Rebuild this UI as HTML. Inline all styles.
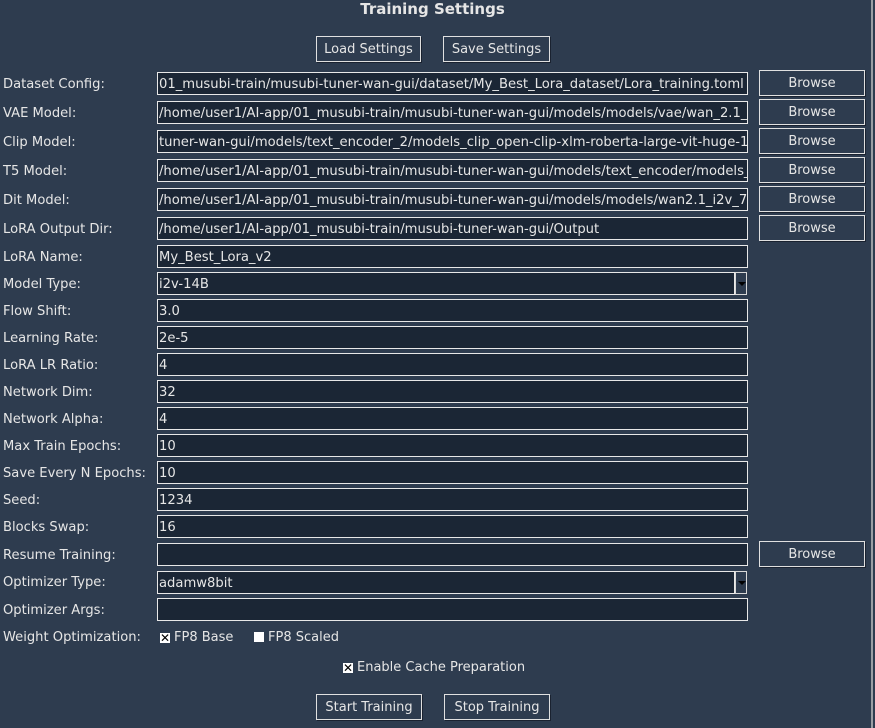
<!DOCTYPE html>
<html><head><meta charset="utf-8"><style>
body{margin:0;width:875px;height:728px;background:#2e3c4f;overflow:hidden;position:relative;font-family:"DejaVu Sans","Liberation Sans",sans-serif;font-size:13px;color:#e6e6e6}
.a{position:absolute;white-space:nowrap}
.l{position:absolute;left:3px;line-height:16px;font-size:13.1px;margin-top:2px}
.i{position:absolute;left:157px;width:588px;height:21px;border:1px solid #e8e8e8;background:#1b2635;overflow:hidden;white-space:nowrap;line-height:23px;padding-left:1px;box-sizing:content-box;font-size:13.15px}
.c{width:575px}
.ar{position:absolute;left:735px;width:10px;height:21px;border:1px solid #d8d8d8;background:#2e3c4f}
.ar:after{content:"";position:absolute;left:2px;top:9px;border-left:4px solid transparent;border-right:4px solid transparent;border-top:4px solid #000}
.b{position:absolute;border:1px solid #e0e0e0;background:#2e3c4f;text-align:center;line-height:26px;height:24px;box-shadow:1px 1px 0 #1a2230}
.br{left:759px;width:104px}
.cb{display:inline-block;width:10px;height:10px;background:#fff;vertical-align:-1px;margin-right:4px;position:relative;color:#000;font-size:12px;line-height:10px;text-align:center;font-weight:900}
</style></head><body>
<div class="a" style="left:0;width:865px;text-align:center;top:0;font-weight:bold;font-size:15px;line-height:18px">Training Settings</div>
<div class="b" style="left:316px;top:36px;width:103px">Load Settings</div>
<div class="b" style="left:443px;top:36px;width:105px">Save Settings</div>
<div class="a" style="left:871px;top:0;width:2px;height:728px;background:#9a9ea4"></div>

<div class="l" style="top:75px">Dataset Config:</div><div class="i" style="top:72px">01_musubi-train/musubi-tuner-wan-gui/dataset/My_Best_Lora_dataset/Lora_training.toml</div><div class="b br" style="top:70px">Browse</div>
<div class="l" style="top:104px">VAE Model:</div><div class="i" style="top:101px">/home/user1/AI-app/01_musubi-train/musubi-tuner-wan-gui/models/models/vae/wan_2.1_vae.safetensors</div><div class="b br" style="top:99px">Browse</div>
<div class="l" style="top:133px">Clip Model:</div><div class="i" style="top:130px">tuner-wan-gui/models/text_encoder_2/models_clip_open-clip-xlm-roberta-large-vit-huge-14.pth</div><div class="b br" style="top:128px">Browse</div>
<div class="l" style="top:162px">T5 Model:</div><div class="i" style="top:159px">/home/user1/AI-app/01_musubi-train/musubi-tuner-wan-gui/models/text_encoder/models_t5</div><div class="b br" style="top:157px">Browse</div>
<div class="l" style="top:191px">Dit Model:</div><div class="i" style="top:188px">/home/user1/AI-app/01_musubi-train/musubi-tuner-wan-gui/models/models/wan2.1_i2v_720p</div><div class="b br" style="top:186px">Browse</div>
<div class="l" style="top:220px">LoRA Output Dir:</div><div class="i" style="top:217px">/home/user1/AI-app/01_musubi-train/musubi-tuner-wan-gui/Output</div><div class="b br" style="top:215px">Browse</div>

<div class="l" style="top:248px">LoRA Name:</div><div class="i" style="top:245px">My_Best_Lora_v2</div>
<div class="l" style="top:275px">Model Type:</div><div class="i c" style="top:272px">i2v-14B</div><div class="ar" style="top:272px"></div>
<div class="l" style="top:302px">Flow Shift:</div><div class="i" style="top:299px">3.0</div>
<div class="l" style="top:329px">Learning Rate:</div><div class="i" style="top:326px">2e-5</div>
<div class="l" style="top:356px">LoRA LR Ratio:</div><div class="i" style="top:353px">4</div>
<div class="l" style="top:383px">Network Dim:</div><div class="i" style="top:380px">32</div>
<div class="l" style="top:410px">Network Alpha:</div><div class="i" style="top:407px">4</div>
<div class="l" style="top:437px">Max Train Epochs:</div><div class="i" style="top:434px">10</div>
<div class="l" style="top:464px">Save Every N Epochs:</div><div class="i" style="top:461px">10</div>
<div class="l" style="top:491px">Seed:</div><div class="i" style="top:488px">1234</div>
<div class="l" style="top:518px">Blocks Swap:</div><div class="i" style="top:515px">16</div>
<div class="l" style="top:546px">Resume Training:</div><div class="i" style="top:543px"></div><div class="b br" style="top:541px">Browse</div>
<div class="l" style="top:573px">Optimizer Type:</div><div class="i c" style="top:571px">adamw8bit</div><div class="ar" style="top:571px"></div>
<div class="l" style="top:601px">Optimizer Args:</div><div class="i" style="top:598px"></div>
<div class="l" style="top:628px">Weight Optimization:</div>
<div class="a" style="left:160px;top:630px;line-height:16px"><span class="cb">✕</span>FP8 Base</div>
<div class="a" style="left:254px;top:630px;line-height:16px"><span class="cb"></span>FP8 Scaled</div>
<div class="a" style="left:343px;top:660px;line-height:16px"><span class="cb">✕</span>Enable Cache Preparation</div>
<div class="b" style="left:316px;top:694px;width:104px">Start Training</div>
<div class="b" style="left:444px;top:694px;width:104px">Stop Training</div>
</body></html>
